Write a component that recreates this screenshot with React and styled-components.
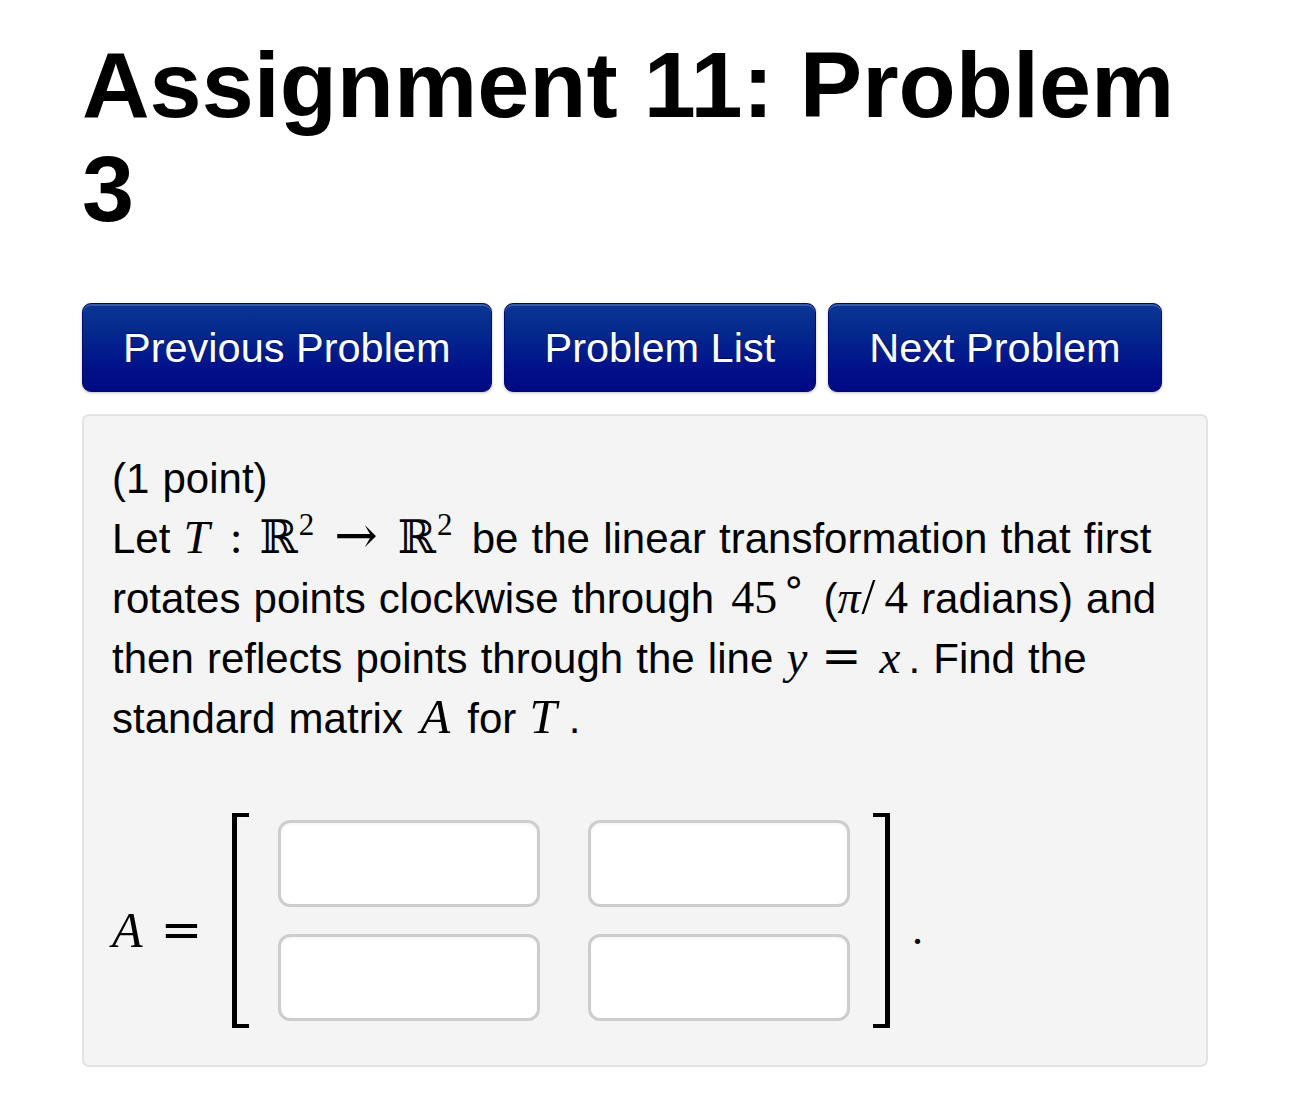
import React from "react";
import styled, { createGlobalStyle } from "styled-components";

const Global = createGlobalStyle`
  html, body { margin: 0; padding: 0; background: #ffffff; }
  body { font-family: "Liberation Sans", Arial, Helvetica, sans-serif; color: #000; }
`;

const Page = styled.div`
  padding: 0 82px 30px 82px;
  width: 1126px;
`;

const Title = styled.h1`
  margin: 33px 0 0 0;
  font-size: 93.6px;
  font-weight: 700;
  line-height: 104px;
`;

const NavBar = styled.div`
  display: flex;
  gap: 12px;
  margin-top: 62px;
`;

const NavButton = styled.button`
  height: 89px;
  padding: 0 40px;
  border: 1px solid #00096e;
  border-radius: 9px;
  background: linear-gradient(to bottom, #0b3694 0%, #042a8d 30%, #00108a 75%, #000a82 100%);
  box-shadow: inset 0 2px 0 rgba(255, 255, 255, 0.18), 0 1px 3px rgba(0, 0, 0, 0.25);
  color: #ffffff;
  font-family: "Liberation Sans", Arial, sans-serif;
  font-size: 41.5px;
  text-shadow: 0 -1px 1px rgba(0, 0, 0, 0.45);
  display: flex;
  align-items: center;
  justify-content: center;
  cursor: pointer;
`;

const ProblemBox = styled.div`
  margin-top: 22px;
  background: #f4f4f4;
  border: 2px solid #e3e3e3;
  border-radius: 7px;
  padding: 33px 28px 37px 28px;
`;

const Para = styled.p`
  margin: 0;
  font-size: 42px;
  line-height: 60px;
  word-spacing: 1.5px;
`;

const MathVar = styled.span`
  font-family: "Liberation Serif", "DejaVu Serif", serif;
  font-style: italic;
  font-size: ${(p) => p.$size || 47}px;
  line-height: 1;
  margin-left: ${(p) => p.$ml || 0}px;
  margin-right: ${(p) => p.$mr || 0}px;
`;

const MathRm = styled.span`
  font-family: "Liberation Serif", "DejaVu Serif", serif;
  font-size: ${(p) => p.$size || 46}px;
  line-height: 1;
  margin-left: ${(p) => p.$ml || 0}px;
  margin-right: ${(p) => p.$mr || 0}px;
`;

const MathSym = styled.span`
  font-family: "DejaVu Serif", serif;
  font-size: ${(p) => p.$size || 44}px;
  font-weight: 300;
  line-height: 1;
  margin-left: ${(p) => p.$ml || 0}px;
  margin-right: ${(p) => p.$mr || 0}px;
`;

const Sup = styled.span`
  font-family: ${(p) => (p.$ring ? '"DejaVu Sans", sans-serif' : '"Liberation Serif", serif')};
  font-size: ${(p) => p.$size || 31}px;
  line-height: 0;
  vertical-align: 18px;
  margin-left: ${(p) => p.$ml || 0}px;
  margin-right: ${(p) => p.$mr || 0}px;
`;

const MatrixRow = styled.div`
  display: flex;
  align-items: center;
  margin-top: 64px;
`;

const MatrixLabel = styled.div`
  display: flex;
  align-items: baseline;
  margin-top: 18px;
  width: 120px;
`;

const Bracket = styled.div`
  width: 12px;
  height: 207px;
  border-top: 4px solid #000;
  border-bottom: 4px solid #000;
  ${(p) => (p.$side === "left" ? "border-left: 5px solid #000;" : "border-right: 5px solid #000;")}
`;

const Cells = styled.div`
  display: grid;
  grid-template-columns: 262px 262px;
  column-gap: 48px;
  row-gap: 27px;
  margin: 0 23px 0 29px;
`;

const Cell = styled.input`
  box-sizing: border-box;
  width: 262px;
  height: 87px;
  border: 3px solid #cdcdcd;
  border-radius: 12px;
  background: #ffffff;
  box-shadow: inset 0 2px 3px rgba(0, 0, 0, 0.04);
  outline: none;
  font-size: 36px;
  padding: 0 12px;
`;

const Period = styled.span`
  font-family: "Liberation Serif", serif;
  font-size: 44px;
  margin-left: 22px;
  margin-top: 18px;
`;

export default function App() {
  return (
    <>
      <Global />
      <Page>
        <Title>Assignment 11: Problem 3</Title>
        <NavBar>
          <NavButton>Previous Problem</NavButton>
          <NavButton>Problem List</NavButton>
          <NavButton>Next Problem</NavButton>
        </NavBar>
        <ProblemBox>
          <Para>
            (1 point)
            <br />
            Let <MathVar $mr={20}>T</MathVar>
            <MathRm>:</MathRm>
            <MathSym $size={46} $ml={17}>ℝ</MathSym>
            <Sup $ml={1}>2</Sup>
            <MathSym $size={52} $ml={20} $mr={20}>→</MathSym>
            <MathSym $size={46}>ℝ</MathSym>
            <Sup $ml={1} $mr={6}>2</Sup> be the linear transformation that first rotates points
            clockwise through <MathRm $ml={4}>45</MathRm>
            <Sup $ring $size={40} $ml={4} $mr={4}>∘</Sup> (<MathVar $size={46}>π</MathVar>
            <MathRm $ml={1} $mr={9} $size={50}>/</MathRm>
            <MathRm $size={47}>4</MathRm> radians) and then reflects points through the line{" "}
            <MathVar $mr={14}>y</MathVar>
            <MathSym $size={48} $mr={18}>=</MathSym>
            <MathVar $mr={8}>x</MathVar>. Find the standard matrix{" "}
            <MathVar $size={49} $ml={4} $mr={4}>A</MathVar> for{" "}
            <MathVar $size={49} $mr={12}>T</MathVar>.
          </Para>
          <MatrixRow>
            <MatrixLabel>
              <MathVar $size={50}>A</MathVar>
              <MathSym $size={50} $ml={18}>=</MathSym>
            </MatrixLabel>
            <Bracket $side="left" />
            <Cells>
              <Cell type="text" aria-label="A11" />
              <Cell type="text" aria-label="A12" />
              <Cell type="text" aria-label="A21" />
              <Cell type="text" aria-label="A22" />
            </Cells>
            <Bracket $side="right" />
            <Period>.</Period>
          </MatrixRow>
        </ProblemBox>
      </Page>
    </>
  );
}
